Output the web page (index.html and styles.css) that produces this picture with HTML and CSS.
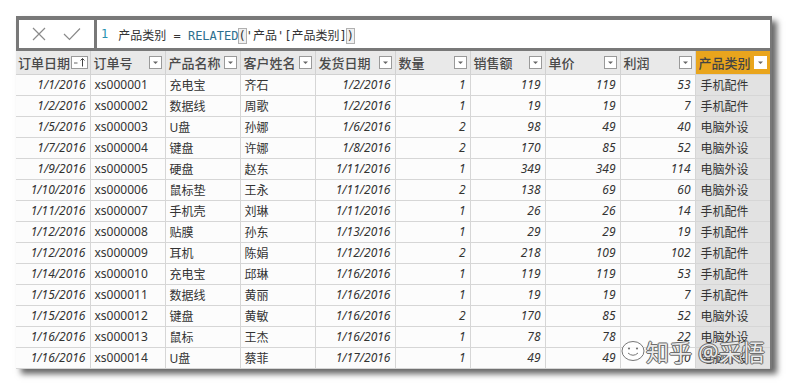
FILE: index.html
```html
<!DOCTYPE html>
<html lang="zh">
<head>
<meta charset="utf-8">
<title>RELATED</title>
<link rel="stylesheet" href="styles.css">
</head>
<body>
<div class="frame">
  <div class="formula">
    <div class="actions">
      <svg class="ico" width="14" height="14" viewBox="0 0 14 14"><path d="M1 1L13 13M13 1L1 13" stroke="#8a8a8a" stroke-width="1.2" fill="none"/></svg>
      <svg class="ico" width="18" height="14" viewBox="0 0 18 14"><path d="M1 7L6.5 12.5L17 1.5" stroke="#8a8a8a" stroke-width="1.2" fill="none"/></svg>
    </div>
    <div class="expr"><span class="ln">1</span><span class="code">产品类别 = <span class="fn">RELATED</span><span class="br">(</span>'产品'[产品类别]<span class="br">)</span></span></div>
  </div>
  <table class="grid">
    <colgroup>
      <col class="w74"><col class="w75"><col class="w75"><col class="w75"><col class="w80"><col class="w75"><col class="w75"><col class="w75"><col class="w75"><col>
    </colgroup>
    <thead>
      <tr>
        <th class="first"><div class="hc"><span>订单日期</span><svg width="17" height="13" viewBox="0 0 17 13"><rect x="0.5" y="0.5" width="16" height="12" fill="#fff" stroke="#9a9a9a"/><path d="M3 7h3.5" stroke="#666"/><path d="M11.5 2.5v8M9.5 4.5L11.5 2.5L13.5 4.5" stroke="#444" fill="none"/></svg></div></th>
        <th><div class="hc"><span>订单号</span><svg class="dd" width="13" height="13" viewBox="0 0 13 13"><rect x="0.5" y="0.5" width="12" height="12" fill="#fff" stroke="#9a9a9a"/><path d="M4 5.5h5l-2.5 2.5z" fill="#666"/></svg></div></th>
        <th><div class="hc"><span>产品名称</span><svg class="dd" width="13" height="13" viewBox="0 0 13 13"><rect x="0.5" y="0.5" width="12" height="12" fill="#fff" stroke="#9a9a9a"/><path d="M4 5.5h5l-2.5 2.5z" fill="#666"/></svg></div></th>
        <th><div class="hc"><span>客户姓名</span><svg class="dd" width="13" height="13" viewBox="0 0 13 13"><rect x="0.5" y="0.5" width="12" height="12" fill="#fff" stroke="#9a9a9a"/><path d="M4 5.5h5l-2.5 2.5z" fill="#666"/></svg></div></th>
        <th><div class="hc"><span>发货日期</span><svg class="dd" width="13" height="13" viewBox="0 0 13 13"><rect x="0.5" y="0.5" width="12" height="12" fill="#fff" stroke="#9a9a9a"/><path d="M4 5.5h5l-2.5 2.5z" fill="#666"/></svg></div></th>
        <th><div class="hc"><span>数量</span><svg class="dd" width="13" height="13" viewBox="0 0 13 13"><rect x="0.5" y="0.5" width="12" height="12" fill="#fff" stroke="#9a9a9a"/><path d="M4 5.5h5l-2.5 2.5z" fill="#666"/></svg></div></th>
        <th><div class="hc"><span>销售额</span><svg class="dd" width="13" height="13" viewBox="0 0 13 13"><rect x="0.5" y="0.5" width="12" height="12" fill="#fff" stroke="#9a9a9a"/><path d="M4 5.5h5l-2.5 2.5z" fill="#666"/></svg></div></th>
        <th><div class="hc"><span>单价</span><svg class="dd" width="13" height="13" viewBox="0 0 13 13"><rect x="0.5" y="0.5" width="12" height="12" fill="#fff" stroke="#9a9a9a"/><path d="M4 5.5h5l-2.5 2.5z" fill="#666"/></svg></div></th>
        <th><div class="hc"><span>利润</span><svg class="dd" width="13" height="13" viewBox="0 0 13 13"><rect x="0.5" y="0.5" width="12" height="12" fill="#fff" stroke="#9a9a9a"/><path d="M4 5.5h5l-2.5 2.5z" fill="#666"/></svg></div></th>
        <th class="sel"><div class="hc"><span>产品类别</span><svg class="dd" width="13" height="13" viewBox="0 0 13 13"><rect x="0.5" y="0.5" width="12" height="12" fill="#fff" stroke="#fff"/><path d="M4 5.5h5l-2.5 2.5z" fill="#666"/></svg></div></th>
      </tr>
    </thead>
    <tbody>
      <tr><td class="n">1/1/2016</td><td>xs000001</td><td>充电宝</td><td>齐石</td><td class="n">1/2/2016</td><td class="n">1</td><td class="n">119</td><td class="n">119</td><td class="n">53</td><td class="cat">手机配件</td></tr>
      <tr><td class="n">1/2/2016</td><td>xs000002</td><td>数据线</td><td>周歌</td><td class="n">1/2/2016</td><td class="n">1</td><td class="n">19</td><td class="n">19</td><td class="n">7</td><td class="cat">手机配件</td></tr>
      <tr><td class="n">1/5/2016</td><td>xs000003</td><td>U盘</td><td>孙娜</td><td class="n">1/6/2016</td><td class="n">2</td><td class="n">98</td><td class="n">49</td><td class="n">40</td><td class="cat">电脑外设</td></tr>
      <tr><td class="n">1/7/2016</td><td>xs000004</td><td>键盘</td><td>许娜</td><td class="n">1/8/2016</td><td class="n">2</td><td class="n">170</td><td class="n">85</td><td class="n">52</td><td class="cat">电脑外设</td></tr>
      <tr><td class="n">1/9/2016</td><td>xs000005</td><td>硬盘</td><td>赵东</td><td class="n">1/11/2016</td><td class="n">1</td><td class="n">349</td><td class="n">349</td><td class="n">114</td><td class="cat">电脑外设</td></tr>
      <tr><td class="n">1/10/2016</td><td>xs000006</td><td>鼠标垫</td><td>王永</td><td class="n">1/11/2016</td><td class="n">2</td><td class="n">138</td><td class="n">69</td><td class="n">60</td><td class="cat">电脑外设</td></tr>
      <tr><td class="n">1/11/2016</td><td>xs000007</td><td>手机壳</td><td>刘琳</td><td class="n">1/11/2016</td><td class="n">1</td><td class="n">26</td><td class="n">26</td><td class="n">14</td><td class="cat">手机配件</td></tr>
      <tr><td class="n">1/12/2016</td><td>xs000008</td><td>贴膜</td><td>孙东</td><td class="n">1/13/2016</td><td class="n">1</td><td class="n">29</td><td class="n">29</td><td class="n">19</td><td class="cat">手机配件</td></tr>
      <tr><td class="n">1/12/2016</td><td>xs000009</td><td>耳机</td><td>陈娟</td><td class="n">1/12/2016</td><td class="n">2</td><td class="n">218</td><td class="n">109</td><td class="n">102</td><td class="cat">手机配件</td></tr>
      <tr><td class="n">1/14/2016</td><td>xs000010</td><td>充电宝</td><td>邱琳</td><td class="n">1/16/2016</td><td class="n">1</td><td class="n">119</td><td class="n">119</td><td class="n">53</td><td class="cat">手机配件</td></tr>
      <tr><td class="n">1/15/2016</td><td>xs000011</td><td>数据线</td><td>黄丽</td><td class="n">1/16/2016</td><td class="n">1</td><td class="n">19</td><td class="n">19</td><td class="n">7</td><td class="cat">手机配件</td></tr>
      <tr><td class="n">1/15/2016</td><td>xs000012</td><td>键盘</td><td>黄敏</td><td class="n">1/16/2016</td><td class="n">2</td><td class="n">170</td><td class="n">85</td><td class="n">52</td><td class="cat">电脑外设</td></tr>
      <tr><td class="n">1/16/2016</td><td>xs000013</td><td>鼠标</td><td>王杰</td><td class="n">1/16/2016</td><td class="n">1</td><td class="n">78</td><td class="n">78</td><td class="n">22</td><td class="cat">电脑外设</td></tr>
      <tr><td class="n">1/16/2016</td><td>xs000014</td><td>U盘</td><td>蔡菲</td><td class="n">1/17/2016</td><td class="n">1</td><td class="n">49</td><td class="n">49</td><td class="n">20</td><td class="cat">电脑外设</td></tr>
    </tbody>
  </table>
  <div class="watermark">
    <svg width="26" height="24" viewBox="0 0 26 24"><ellipse cx="13" cy="12" rx="11" ry="9.5" fill="rgba(255,255,255,0.8)" stroke="#777" stroke-width="1"/><path d="M8 14q5 4.5 10 0" stroke="#777" fill="none"/><circle cx="9" cy="9.5" r="1.1" fill="#777"/><circle cx="17" cy="9.5" r="1.1" fill="#777"/></svg>
    <span>知乎 @采悟</span>
  </div>
</div>
</body>
</html>
```
FILE: styles.css
```css
html, body {
  margin: 0;
  padding: 0;
  background: #ffffff;
}
body {
  font-family: "Noto Sans", "Noto Sans CJK SC", sans-serif;
  width: 787px;
  height: 388px;
  overflow: hidden;
}
.frame {
  position: relative;
  margin: 16px 0 0 16px;
  width: 756px;
  background: #787878;
  padding-top: 4px;
  box-shadow: 5px 5px 6px rgba(0, 0, 0, 0.6);
}
.formula {
  display: flex;
  gap: 3px;
  height: 28px;
  padding: 0 2px 0 3px;
  margin-bottom: 3px;
}
.actions {
  width: 75px;
  background: #ffffff;
  display: flex;
  align-items: center;
  justify-content: space-around;
  padding: 0 4px;
  box-sizing: border-box;
}
.expr {
  flex: 1;
  background: #ffffff;
  display: flex;
  align-items: center;
  font-family: "DejaVu Sans Mono", "Noto Sans CJK SC", monospace;
  font-size: 12px;
  color: #333;
  white-space: pre;
}
.ln {
  color: #2b91af;
  margin-left: 4px;
  margin-right: 10px;
}
.fn {
  color: #2e6f8e;
}
.br {
  background: #f0f0f0;
  outline: 1px solid #b0b0b0;
}
.grid {
  border-collapse: collapse;
  table-layout: fixed;
  width: 756px;
  background: #fcfcfc;
}
.w74 { width: 74px; }
.w75 { width: 75px; }
.w80 { width: 80px; }
.grid th {
  height: 23px;
  background: #e9e9e9;
  border-right: 1px solid #d2d2d2;
  border-bottom: 1px solid #d2d2d2;
  padding: 0 3px;
  font-weight: 500;
  font-size: 13px;
  color: #4a4a4a;
  text-align: left;
  box-sizing: border-box;
}
.grid th.first {
  padding: 0 2px;
}
.grid th.sel {
  background: #e9a51d;
  color: #444;
  border-right: 2px solid #787878;
}
.hc {
  display: flex;
  align-items: center;
  justify-content: space-between;
  white-space: nowrap;
}
.grid td {
  height: 21px;
  box-sizing: border-box;
  border-right: 1px solid #d6d6d6;
  border-bottom: 1px solid #d6d6d6;
  padding: 0 4px;
  font-size: 12px;
  color: #333;
  white-space: nowrap;
  overflow: hidden;
}
.grid td.n {
  text-align: right;
  font-style: italic;
}
.grid td.cat {
  background: #e2e2e2;
  border-right: 2px solid #787878;
  padding-left: 5px;
}
.watermark {
  position: absolute;
  left: 604px;
  top: 318px;
  display: flex;
  align-items: center;
  font-size: 23px;
  color: rgba(255, 255, 255, 0.9);
  text-shadow: 0 0 1px #555, 0 0 1px #555, 1px 0 0 #777, -1px 0 0 #777, 0 1px 0 #777, 0 -1px 0 #777;
  white-space: nowrap;
}
```
